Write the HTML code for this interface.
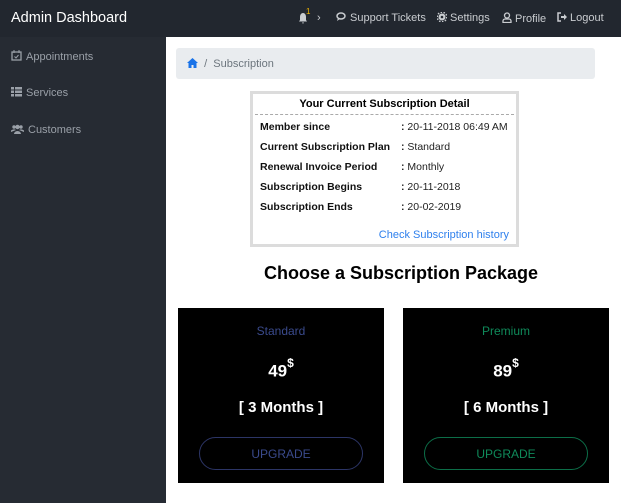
<!DOCTYPE html>
<html><head><style>
*{margin:0;padding:0;box-sizing:border-box}
body{width:621px;height:503px;overflow:hidden;background:#fff;font-family:"Liberation Sans",sans-serif;position:relative;font-size:12px}
.hdr{position:absolute;left:0;top:0;width:621px;height:37px;background:#22272f;color:#fff}
.hdr .t{position:absolute;left:11px;top:10px;font-size:14.5px}
.nav{position:absolute;top:12px;font-size:11px;color:#c9ccd0;white-space:nowrap}
.nav svg{vertical-align:-1px;margin-right:3px}
.side{position:absolute;left:0;top:37px;width:166px;height:466px;background:#262b33;color:#9aa0a8}
.side div{position:absolute;left:11px;font-size:11px}
.side svg{vertical-align:-1px;margin-right:4px}
.bc{position:absolute;left:176px;top:48px;width:419px;height:31px;background:#e9ecef;border-radius:3px;color:#6c757d;font-size:11px;padding:10px 0 0 11px}
.box{position:absolute;left:250px;top:91px;width:269px;height:156px;border:3px solid #dcdcdc}
.box .h{text-align:center;font-weight:bold;font-size:11px;padding-top:4px;height:21px;border-bottom:1px dashed #aaa;margin:0 2px}
.row{position:absolute;left:7px;font-size:10.5px;font-weight:bold;color:#111}
.row span{position:absolute;left:141px;font-weight:normal;white-space:nowrap;color:#222;font-size:10.5px}
.row span b{font-weight:bold}
.lnk{position:absolute;right:7px;top:135px;color:#2f80ed;font-size:11px}
h2{position:absolute;left:166px;width:470px;text-align:center;top:263px;font-size:18px}
.card{position:absolute;top:308px;width:206px;height:175px;background:#000;text-align:center;color:#fff}
.card .n{position:absolute;top:16px;width:100%;font-size:12px}
.card .p{position:absolute;top:51px;width:100%;font-size:17px;font-weight:bold}
.card .p sup{font-size:12px;position:relative;top:-3px}
.card .m{position:absolute;top:91px;width:100%;font-size:15px;font-weight:bold}
.card .b{position:absolute;left:21px;top:129px;width:164px;height:33px;border-radius:17px;border:1px solid;font-size:12px;padding-top:9px}
</style></head><body>
<div class="hdr"><div class="t">Admin Dashboard</div>
<div class="nav" style="left:298px"><svg width="10" height="12" viewBox="0 0 10 12"><path d="M5 1C3 1 2 3 2 5v3L1 9.5h8L8 8V5C8 3 7 1 5 1zM4 10.5h2a1 1 0 0 1-2 0z" fill="#c9ccd0"/></svg></div>
<div style="position:absolute;left:306px;top:7px;color:#f0b400;font-size:8px">1</div>
<div class="nav" style="left:317px">›</div>
<div class="nav" style="left:336px"><svg width="11" height="10" viewBox="0 0 11 10"><ellipse cx="5" cy="4" rx="4" ry="3" fill="none" stroke="#c9ccd0" stroke-width="1.5"/><path d="M2 6L1 9l3-2" fill="#c9ccd0"/></svg>Support Tickets</div>
<div class="nav" style="left:437px"><svg width="10" height="10" viewBox="0 0 10 10"><circle cx="5" cy="5" r="3.5" fill="#c9ccd0"/><circle cx="5" cy="5" r="4.8" fill="none" stroke="#c9ccd0" stroke-width="1.5" stroke-dasharray="1.5 1.5"/><circle cx="5" cy="5" r="1.3" fill="#22272f"/></svg>Settings</div>
<div class="nav" style="left:502px"><svg width="10" height="11" viewBox="0 0 10 11"><circle cx="5" cy="3.5" r="2.5" fill="none" stroke="#c9ccd0" stroke-width="1.3"/><path d="M1 10.5V9a2 2 0 0 1 2-2h4a2 2 0 0 1 2 2v1.5z" fill="none" stroke="#c9ccd0" stroke-width="1.3"/></svg>Profile</div>
<div class="nav" style="left:557px"><svg width="10" height="10" viewBox="0 0 10 10"><path d="M4 1H1v8h3" fill="none" stroke="#c9ccd0" stroke-width="1.5"/><path d="M4 4h3V2l3 3-3 3V6H4z" fill="#c9ccd0"/></svg>Logout</div>
</div>
<div class="side">
<div style="top:13px"><svg width="11" height="11" viewBox="0 0 11 11"><rect x="1" y="2" width="9" height="8" fill="none" stroke="#9aa0a8" stroke-width="1.3"/><path d="M3 0v3M8 0v3M3.5 6.5l1.5 1.5 2.5-3" stroke="#9aa0a8" fill="none"/></svg>Appointments</div>
<div style="top:50px"><svg width="11" height="10" viewBox="0 0 11 10"><path d="M0 0h3v2.5H0zM4 0h7v2.5H4zM0 3.5h3V6H0zM4 3.5h7V6H4zM0 7h3v2.5H0zM4 7h7v2.5H4z" fill="#9aa0a8"/></svg>Services</div>
<div style="top:87px"><svg width="13" height="10" viewBox="0 0 13 10"><circle cx="3" cy="3" r="1.7" fill="#9aa0a8"/><circle cx="10" cy="3" r="1.7" fill="#9aa0a8"/><circle cx="6.5" cy="3" r="2.2" fill="#9aa0a8"/><path d="M0 8a3 2 0 0 1 5-2zM13 8a3 2 0 0 0-5-2zM3 10a3.5 3 0 0 1 7 0z" fill="#9aa0a8"/></svg>Customers</div>
</div>
<div class="bc"><svg width="11" height="10" viewBox="0 0 11 10" style="vertical-align:-1px"><path d="M5.5 0L0 5h1.5v5h3V7h2v3h3V5H11z" fill="#1a73e8"/></svg> &nbsp;/ &nbsp;Subscription</div>
<div class="box"><div class="h">Your Current Subscription Detail</div>
<div class="row" style="top:27px">Member since<span><b>:</b> 20-11-2018 06:49 AM</span></div>
<div class="row" style="top:47px">Current Subscription Plan<span><b>:</b> Standard</span></div>
<div class="row" style="top:67px">Renewal Invoice Period<span><b>:</b> Monthly</span></div>
<div class="row" style="top:87px">Subscription Begins<span><b>:</b> 20-11-2018</span></div>
<div class="row" style="top:107px">Subscription Ends<span><b>:</b> 20-02-2019</span></div>
<div class="lnk">Check Subscription history</div>
</div>
<h2>Choose a Subscription Package</h2>
<div class="card" style="left:178px"><div class="n" style="color:#3a4a8c">Standard</div><div class="p">49<sup>$</sup></div><div class="m">[ 3 Months ]</div><div class="b" style="border-color:#2c3566;color:#3a4a8c">UPGRADE</div></div>
<div class="card" style="left:403px"><div class="n" style="color:#0f8a5a">Premium</div><div class="p">89<sup>$</sup></div><div class="m">[ 6 Months ]</div><div class="b" style="border-color:#0c6e48;color:#0f8a5a">UPGRADE</div></div>
</body></html>
